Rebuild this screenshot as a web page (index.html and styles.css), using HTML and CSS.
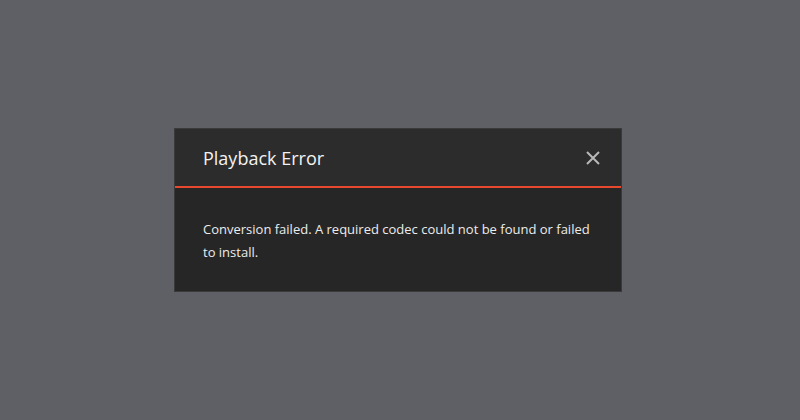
FILE: index.html
```html
<!DOCTYPE html>
<html lang="en">
<head>
  <meta charset="UTF-8">
  <title>Playback Error</title>
  <link rel="stylesheet" href="styles.css">
</head>
<body>

  <div class="overlay">
    <div class="dialog">
      <div class="dialogHeader">
        <h2>Playback Error</h2>
        <button class="closeBtn" aria-label="Close">
          <svg width="14" height="14" viewBox="0 0 14 14">
            <path d="M1 1 L13 13 M13 1 L1 13" stroke="#b8b8b8" stroke-width="2" fill="none"/>
          </svg>
        </button>
      </div>
      <div class="dialogBody">
        <p>Conversion failed. A required codec could not be found or failed to install.</p>
      </div>
    </div>
  </div>

</body>
</html>
```

FILE: styles.css
```css
html, body {
  margin: 0;
  height: 100%;
}

body {
  font-family: "Open Sans", "Noto Sans", sans-serif;
  background-color: #5f6065;
}

.overlay {
  height: 100%;
  display: flex;
  align-items: center;
  justify-content: center;
}

.dialog {
  box-sizing: border-box;
  width: 448px;
  margin-right: 4px;
  background: #262626;
  border: 1px solid #3a3a3a;
}

.dialogHeader {
  display: flex;
  align-items: center;
  justify-content: space-between;
  height: 57px;
  padding: 0 21px 0 28px;
  background: #2c2c2c;
  border-bottom: 2px solid #e8492e;
}

.dialogHeader h2 {
  margin: 0;
  font-size: 18px;
  font-weight: normal;
  color: #f2f2f2;
}

.closeBtn {
  background: none;
  border: none;
  padding: 0;
  display: flex;
  cursor: pointer;
}

.dialogBody {
  padding: 30px 28px 27px;
}

.dialogBody p {
  margin: 0;
  font-size: 13px;
  line-height: 23px;
  color: #ececec;
}
```
